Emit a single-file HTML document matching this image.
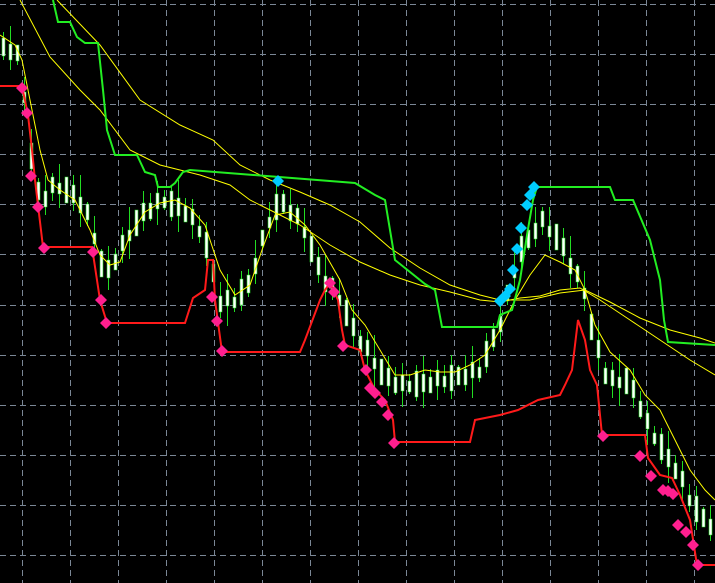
<!DOCTYPE html><html><head><style>html,body{margin:0;padding:0;background:#000;overflow:hidden}svg{display:block}</style></head><body>
<svg width="715" height="583" xmlns="http://www.w3.org/2000/svg">
<rect width="715" height="583" fill="#000"/>
<path stroke="#7b8796" stroke-width="1" stroke-dasharray="6,4" fill="none" d="M22.5 0V583M70.5 0V583M118.5 0V583M166.5 0V583M214.5 0V583M262.5 0V583M310.5 0V583M358.5 0V583M406.5 0V583M454.5 0V583M502.5 0V583M550.5 0V583M598.5 0V583M646.5 0V583M694.5 0V583M0 4.5H715M0 54.5H715M0 104.5H715M0 154.5H715M0 204.5H715M0 254.5H715M0 305.5H715M0 355.5H715M0 405.5H715M0 455.5H715M0 505.5H715M0 555.5H715"/>
<path stroke="#22dd22" stroke-width="1" fill="none" d="M3.5 32V60M10.5 26V70M17.5 45V65M24.5 77V113M31.5 129V181M38.5 178V202M45.5 175V215M52.5 173V201M59.5 164V208M66.5 179V199M73.5 175V211M80.5 175V227M87.5 202V226M94.5 216V256M101.5 249V277M108.5 246V290M115.5 248V268M122.5 227V263M129.5 207V259M136.5 210V234M143.5 191V231M150.5 193V221M157.5 181V225M164.5 190V210M171.5 185V221M178.5 180V232M185.5 198V222M192.5 199V239M199.5 215V243M206.5 222V266M213.5 262V282M220.5 282V318M227.5 274V326M234.5 288V312M241.5 271V311M248.5 269V297M255.5 240V284M262.5 230V250M269.5 202V238M276.5 180V232M283.5 190V214M290.5 189V229M297.5 204V232M304.5 208V252M311.5 238V258M318.5 247V283M325.5 254V306M332.5 276V300M339.5 278V318M346.5 298V326M353.5 304V348M360.5 330V350M367.5 332V368M374.5 335V387M381.5 359V383M388.5 356V396M395.5 367V395M402.5 363V407M409.5 374V394M416.5 365V401M423.5 356V408M430.5 369V393M437.5 360V400M444.5 365V393M451.5 355V399M458.5 365V385M465.5 355V391M472.5 346V398M479.5 358V382M486.5 333V373M493.5 323V351M500.5 298V342M507.5 285V305M514.5 252V288M521.5 222V274M528.5 226V250M535.5 207V247M542.5 207V235M549.5 207V251M556.5 226V246M563.5 228V264M570.5 236V288M577.5 264V288M584.5 271V311M591.5 312V340M598.5 326V370M605.5 362V382M612.5 362V398M619.5 354V406M626.5 368V392M633.5 368V408M640.5 391V419M647.5 401V445M654.5 426V446M661.5 428V464M668.5 431V483M675.5 455V479M682.5 461V501M689.5 484V512M696.5 486V530M703.5 507V527M710.5 505V541"/>
<g fill="#fff" stroke="#22dd22" stroke-width="0.6">
<path d="M2 38h3v18h-3zM9 44h3v16h-3zM16 45h3v16h-3zM23 92h3v11h-3zM30 143h3v26h-3zM37 182h3v18h-3zM44 191h3v16h-3zM51 177h3v16h-3zM58 183h3v11h-3zM65 177h3v26h-3zM72 185h3v18h-3zM79 197h3v16h-3zM86 204h3v16h-3zM93 233h3v11h-3zM100 251h3v26h-3zM107 260h3v18h-3zM114 254h3v16h-3zM121 235h3v16h-3zM128 230h3v11h-3zM135 210h3v26h-3zM142 203h3v18h-3zM149 203h3v16h-3zM156 193h3v16h-3zM163 197h3v11h-3zM170 191h3v26h-3zM177 198h3v18h-3zM184 206h3v16h-3zM191 209h3v16h-3zM198 226h3v11h-3zM205 232h3v26h-3zM212 264h3v18h-3zM219 296h3v16h-3zM226 290h3v16h-3zM233 297h3v11h-3zM240 279h3v26h-3zM247 275h3v18h-3zM254 258h3v16h-3zM261 230h3v16h-3zM268 217h3v11h-3zM275 194h3v26h-3zM282 194h3v18h-3zM289 205h3v16h-3zM296 208h3v16h-3zM303 227h3v11h-3zM310 236h3v26h-3zM317 257h3v18h-3zM324 276h3v16h-3zM331 278h3v16h-3zM338 295h3v11h-3zM345 300h3v26h-3zM352 318h3v18h-3zM359 336h3v16h-3zM366 340h3v16h-3zM373 358h3v11h-3zM380 359h3v26h-3zM387 368h3v18h-3zM394 377h3v16h-3zM401 375h3v16h-3zM408 381h3v11h-3zM415 371h3v26h-3zM422 374h3v18h-3zM429 377h3v16h-3zM436 370h3v16h-3zM443 376h3v11h-3zM450 365h3v26h-3zM457 367h3v18h-3zM464 369h3v16h-3zM471 362h3v16h-3zM478 367h3v11h-3zM485 341h3v26h-3zM492 329h3v18h-3zM499 316h3v16h-3zM506 285h3v16h-3zM513 267h3v11h-3zM520 236h3v26h-3zM527 230h3v18h-3zM534 223h3v16h-3zM541 211h3v16h-3zM548 226h3v11h-3zM555 224h3v26h-3zM562 238h3v18h-3zM569 258h3v16h-3zM576 266h3v16h-3zM583 288h3v11h-3zM590 314h3v26h-3zM597 340h3v18h-3zM604 368h3v16h-3zM611 370h3v16h-3zM618 377h3v11h-3zM625 368h3v26h-3zM632 380h3v18h-3zM639 401h3v16h-3zM646 413h3v16h-3zM653 433h3v11h-3zM660 434h3v26h-3zM667 449h3v18h-3zM674 463h3v16h-3zM681 471h3v16h-3zM688 495h3v11h-3zM695 496h3v26h-3zM702 509h3v18h-3zM709 519h3v16h-3z"/>
</g>
<polyline fill="none" stroke="#ffff00" stroke-width="1" points="20,0 50,57 80,90 100,110 130,150 160,165 200,175 230,185 250,200 270,210 300,225 330,245 360,262 390,275 420,285 450,292 480,300 500,302 520,298 540,296 560,290 580,288 600,300 630,320 660,340 690,360 715,375"/>
<polyline fill="none" stroke="#ffff00" stroke-width="1" points="57,0 100,45 140,100 180,125 213,140 240,165 270,180 300,192 330,205 360,222 390,248 420,268 450,285 480,295 500,300 530,300 560,293 585,290 610,302 640,318 670,330 700,338 715,343"/>
<polyline fill="none" stroke="#ffff00" stroke-width="1" points="0,35 15,45 22,60 30,100 40,150 48,180 60,190 75,200 90,230 100,255 110,265 120,262 130,235 145,212 160,203 175,200 190,208 205,225 220,270 235,295 250,285 262,250 275,215 290,212 305,225 320,245 340,280 352,310 365,325 380,350 395,375 410,375 425,370 440,372 455,372 470,365 485,355 500,330 515,300 530,275 545,255 560,262 575,270 585,290 595,325 610,352 630,370 645,395 660,410 675,440 690,470 705,490 715,500"/>
<polyline fill="none" stroke="#22ee22" stroke-width="2" points="53,0 58,22 70,22 77,37 85,43 98,43 103,90 107,130 115,155 137,155 145,172 155,175 158,187 170,187 175,183 183,172 190,170 355,183 375,195 385,200 395,260 405,268 425,284 435,290 442,327 497,327 500,315 512,310 520,280 527,235 533,200 537,187 610,187 615,200 633,200 650,240 660,280 664,320 668,342 715,345"/>
<polyline fill="none" stroke="#ff1a1a" stroke-width="2" points="0,86 22,86 28,115 32,150 35,180 43,247 92,247 100,300 107,323 185,323 193,298 205,290 208,260 213,260 215,300 222,352 300,352 305,340 320,300 325,290 330,283 338,300 342,330 345,345 360,350 365,370 375,390 385,400 393,420 395,442 470,442 475,420 500,415 518,410 538,400 560,395 565,385 572,370 578,320 585,340 590,370 597,385 602,435 645,435 648,458 660,475 672,478 680,495 690,520 697,565 715,565"/>
<path fill="#ff1f8f" d="M22 82l6 6-6 6-6-6zM27 107l6 6-6 6-6-6zM31 170l6 6-6 6-6-6zM38 201l6 6-6 6-6-6zM44 242l6 6-6 6-6-6zM93 246l6 6-6 6-6-6zM101 294l6 6-6 6-6-6zM106 317l6 6-6 6-6-6zM212 291l6 6-6 6-6-6zM217 315l6 6-6 6-6-6zM222 345l6 6-6 6-6-6zM330 277l6 6-6 6-6-6zM334 286l6 6-6 6-6-6zM343 340l6 6-6 6-6-6zM366 364l6 6-6 6-6-6zM370 382l6 6-6 6-6-6zM375 387l6 6-6 6-6-6zM382 396l6 6-6 6-6-6zM388 409l6 6-6 6-6-6zM394 437l6 6-6 6-6-6zM603 430l6 6-6 6-6-6zM640 450l6 6-6 6-6-6zM651 470l6 6-6 6-6-6zM663 484l6 6-6 6-6-6zM668 485l6 6-6 6-6-6zM673 488l6 6-6 6-6-6zM678 519l6 6-6 6-6-6zM686 526l6 6-6 6-6-6zM693 539l6 6-6 6-6-6zM698 559l6 6-6 6-6-6z"/>
<path fill="#00ccff" d="M278 175l6 6-6 6-6-6zM500 295l6 6-6 6-6-6zM505 290l6 6-6 6-6-6zM510 283l6 6-6 6-6-6zM513 264l6 6-6 6-6-6zM517 243l6 6-6 6-6-6zM521 222l6 6-6 6-6-6zM527 199l6 6-6 6-6-6zM530 189l6 6-6 6-6-6zM534 181l6 6-6 6-6-6z"/>
</svg></body></html>
